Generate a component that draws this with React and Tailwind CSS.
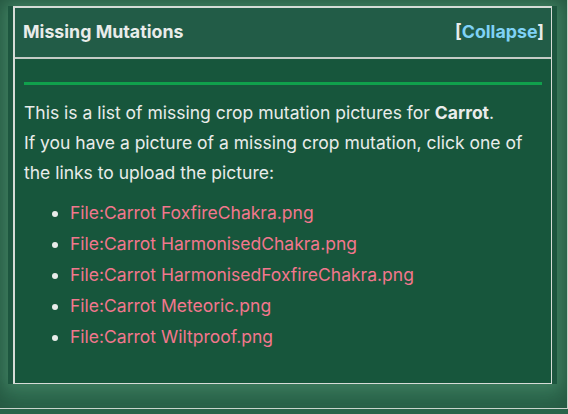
const LINKS = [
  'File:Carrot FoxfireChakra.png',
  'File:Carrot HarmonisedChakra.png',
  'File:Carrot HarmonisedFoxfireChakra.png',
  'File:Carrot Meteoric.png',
  'File:Carrot Wiltproof.png',
];

export default function App() {
  return (
    <div
      className="w-[568px] h-[414px] bg-[#2a644a] overflow-hidden"
      style={{ fontFamily: 'Inter, "Noto Sans", sans-serif' }}
    >
      <div className="h-[409px] border-r border-b border-[#c9d3cc] bg-[#2d6a4f] pt-[6px] pl-[8px] pr-[10px] shadow-[inset_0_0_24px_rgba(0,0,0,0.2)]">
        <div className="bg-[#1d563f] pl-[5px] pr-[5px] shadow-[0_0_14px_4px_rgba(110,180,140,0.3)]">
          <div className="border-2 border-[#d6dcd7] border-r border-b bg-[#17563c] text-[#e9ecea]">
            {/* header */}
            <div className="flex items-center justify-between h-[51px] pl-[8px] pr-[7px] bg-[#225c47] border-b-2 border-[#c4cbc6]">
              <span className="font-bold text-[17.8px]">Missing Mutations</span>
              <span className="font-bold text-[17.8px]">
                [<span className="text-[#7fd2f6]">Collapse</span>]
              </span>
            </div>
            {/* body */}
            <div className="px-[9px] pt-[23px] pb-[31px]">
              <div className="h-[3px] bg-[#10a04c]" />
              <p className="mt-[13px] text-[17.5px] leading-[30px]">
                This is a list of missing crop mutation pictures for <b>Carrot</b>.
                <br />
                If you have a picture of a missing crop mutation, click one of the links to upload the picture:
              </p>
              <ul className="mt-[9px] pl-[46px] list-disc text-[17.5px] leading-[31px] marker:text-[#e9ecea]">
                {LINKS.map((l) => (
                  <li key={l} className="text-[#f2778d]">
                    {l}
                  </li>
                ))}
              </ul>
            </div>
          </div>
        </div>
      </div>
    </div>
  );
}
